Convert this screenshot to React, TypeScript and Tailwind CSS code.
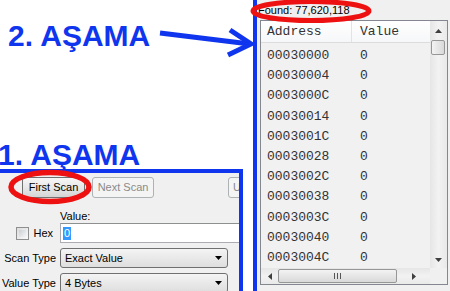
import React from 'react'

const rows = [
    '00030000',
    '00030004',
    '0003000C',
    '00030014',
    '0003001C',
    '00030028',
    '0003002C',
    '00030038',
    '0003003C',
    '00030040',
    '0003004C',
]

const WinButton = ({ label, disabled, className = '' }: { label: string; disabled?: boolean; className?: string }) => (
    <div
        className={`h-[21px] shrink-0 flex items-center justify-center rounded-[3px] border text-[11px] whitespace-nowrap ${
            disabled
                ? 'border-[#adb2b5] bg-[#f4f4f4] text-[#8a8a8a]'
                : 'border-[#707070] bg-linear-to-b from-[#f6f6f6] via-[#e8e8e8] to-[#d4d4d4] text-black'
        } ${className}`}
    >
        {label}
    </div>
)

const WinSelect = ({ value }: { value: string }) => (
    <div className="w-[168px] h-[20px] shrink-0 rounded-[3px] border border-[#707070] bg-linear-to-b from-[#f4f4f4] to-[#dedede] flex items-center pl-[4px] pr-[5px] text-[11px] text-black">
        <span className="flex-1">{value}</span>
        <svg width="7" height="4" viewBox="0 0 7 4">
            <polygon points="0,0 7,0 3.5,4" fill="#000" />
        </svg>
    </div>
)

const Triangle = ({ dir }: { dir: 'up' | 'down' | 'left' | 'right' }) => {
    const pts = {
        up: '0,4 7,4 3.5,0',
        down: '0,0 7,0 3.5,4',
        left: '4,0 4,7 0,3.5',
        right: '0,0 0,7 4,3.5',
    }[dir]
    const horiz = dir === 'up' || dir === 'down'
    return (
        <svg width={horiz ? 7 : 4} height={horiz ? 4 : 7} viewBox={horiz ? '0 0 7 4' : '0 0 4 7'}>
            <polygon points={pts} fill="#3f3f3f" />
        </svg>
    )
}

const App = () => {
    return (
        <div className="relative w-[450px] h-[291px] overflow-hidden bg-white flex font-['Liberation_Sans',Arial,sans-serif]">
            {/* left: headings + scan panel */}
            <div className="w-[253px] shrink-0 flex flex-col">
                <h2 className="mt-[21px] ml-[8px] h-[30px] text-[30px] leading-[30px] font-bold text-[#1035ee] whitespace-nowrap">
                    2. AŞAMA
                </h2>
                <h2 className="mt-[90px] ml-[-2px] h-[28px] text-[30px] leading-[28px] font-bold text-[#1035ee] whitespace-nowrap">
                    1. AŞAMA
                </h2>
                <div className="w-[243px] flex-1 border-t-4 border-r-4 border-[#1035ee] bg-[#f0f0f0] overflow-hidden flex flex-col">
                    <div className="flex pt-[4px] pl-[22px] gap-[7px]">
                        <WinButton label="First Scan" className="w-[63px]" />
                        <WinButton label="Next Scan" disabled className="w-[62px]" />
                        <WinButton label="Undo Scan" disabled className="w-[62px] ml-[67px] justify-start pl-[4px]" />
                    </div>
                    <div className="mt-[12px] ml-[60px] h-[13px] text-[11px] leading-[13px] text-black">Value:</div>
                    <div className="flex items-center h-[20px] gap-[4px]">
                        <div className="w-[56px] shrink-0 flex items-center justify-end gap-[4px] pr-[3px] text-[11px] text-black">
                            <div className="w-[13px] h-[13px] border border-[#8f8f8f] bg-linear-to-br from-[#dcdcdc] to-[#fafafa] p-[2px]">
                                <div className="w-full h-full bg-linear-to-br from-[#cbcfd5] to-[#f5f5f5]" />
                            </div>
                            <span>Hex</span>
                        </div>
                        <div className="w-[190px] h-[20px] shrink-0 border border-[#abadb3] border-t-[#8e8f8f] bg-white flex items-center pl-[2px]">
                            <span className="bg-[#3399ff] text-white text-[11px] leading-[13px] px-[1px]">0</span>
                        </div>
                    </div>
                    <div className="mt-[5px] flex items-center h-[20px] gap-[4px]">
                        <div className="w-[56px] shrink-0 text-right text-[11px] text-black whitespace-nowrap">Scan Type</div>
                        <WinSelect value="Exact Value" />
                    </div>
                    <div className="mt-[5px] flex items-center h-[20px] gap-[4px]">
                        <div className="w-[56px] shrink-0 text-right text-[11px] text-black whitespace-nowrap">Value Type</div>
                        <WinSelect value="4 Bytes" />
                    </div>
                </div>
            </div>

            {/* right: results panel */}
            <div className="flex-1 border-l-4 border-[#1035ee] bg-[#f0f0f0] flex flex-col">
                <div className="h-[20px] pl-[1px] text-[11px] leading-[20px] text-black whitespace-nowrap">Found: 77,620,118</div>
                <div className="ml-[3px] w-[188px] h-[265px] border border-[#828790] flex flex-col bg-[#f1f1f1]">
                    <div className="flex h-[247px]">
                        <div className="flex-1 overflow-hidden font-['Liberation_Mono','Courier_New',monospace] text-[13px] text-[#333]">
                            <div className="flex h-[22px] bg-linear-to-b from-white to-[#f6f7f9] border-b border-[#dcdcdc]">
                                <div className="w-[91px] border-r border-[#e3e3e3] pl-[6px] leading-[22px]">Address</div>
                                <div className="pl-[8px] leading-[22px]">Value</div>
                            </div>
                            <div className="pt-[3px]">
                                {rows.map((addr) => (
                                    <div key={addr} className="flex h-[20.2px] leading-[20px]">
                                        <div className="w-[91px] pl-[6px]">{addr}</div>
                                        <div className="pl-[8px]">0</div>
                                    </div>
                                ))}
                            </div>
                        </div>
                        <div className="w-[17px] shrink-0 bg-linear-to-r from-[#e6e6e6] via-[#f2f2f2] to-[#e9e9e9] flex flex-col items-start">
                            <div className="h-[17px] w-full flex items-center justify-center pt-[2px]">
                                <Triangle dir="up" />
                            </div>
                            <div className="mt-[2px] ml-px w-[14px] h-[15px] rounded-[2px] border border-[#979797] bg-linear-to-r from-[#f3f3f3] to-[#d9d9d9]" />
                            <div className="flex-1" />
                            <div className="h-[17px] w-full flex items-center justify-center">
                                <Triangle dir="down" />
                            </div>
                        </div>
                    </div>
                    <div className="flex h-[16px]">
                        <div className="flex-1 flex items-center bg-linear-to-b from-[#e6e6e6] via-[#f2f2f2] to-[#e9e9e9]">
                            <div className="w-[17px] flex justify-center">
                                <Triangle dir="left" />
                            </div>
                            <div className="w-[119px] h-[14px] rounded-[2px] border border-[#979797] bg-linear-to-b from-[#f3f3f3] to-[#d9d9d9] flex items-center justify-center gap-[2px]">
                                <div className="w-px h-[6px] bg-[#555]" />
                                <div className="w-px h-[6px] bg-[#555]" />
                                <div className="w-px h-[6px] bg-[#555]" />
                            </div>
                            <div className="flex-1 flex justify-center">
                                <Triangle dir="right" />
                            </div>
                        </div>
                        <div className="w-[17px] bg-[#f0f0f0]" />
                    </div>
                </div>
            </div>

            {/* annotations */}
            <svg className="absolute inset-0 pointer-events-none" width="450" height="291" viewBox="0 0 450 291">
                <ellipse cx="311" cy="11" rx="58" ry="9.5" fill="none" stroke="#ee1111" strokeWidth="5" />
                <ellipse cx="50" cy="187" rx="39" ry="14.5" fill="none" stroke="#ee1111" strokeWidth="5.5" />
                <line x1="160" y1="33" x2="250" y2="44" stroke="#1035ee" strokeWidth="5" />
                <polyline points="230,30 251,44 228,55" fill="none" stroke="#1035ee" strokeWidth="5" />
            </svg>
        </div>
    )
}

export default App
